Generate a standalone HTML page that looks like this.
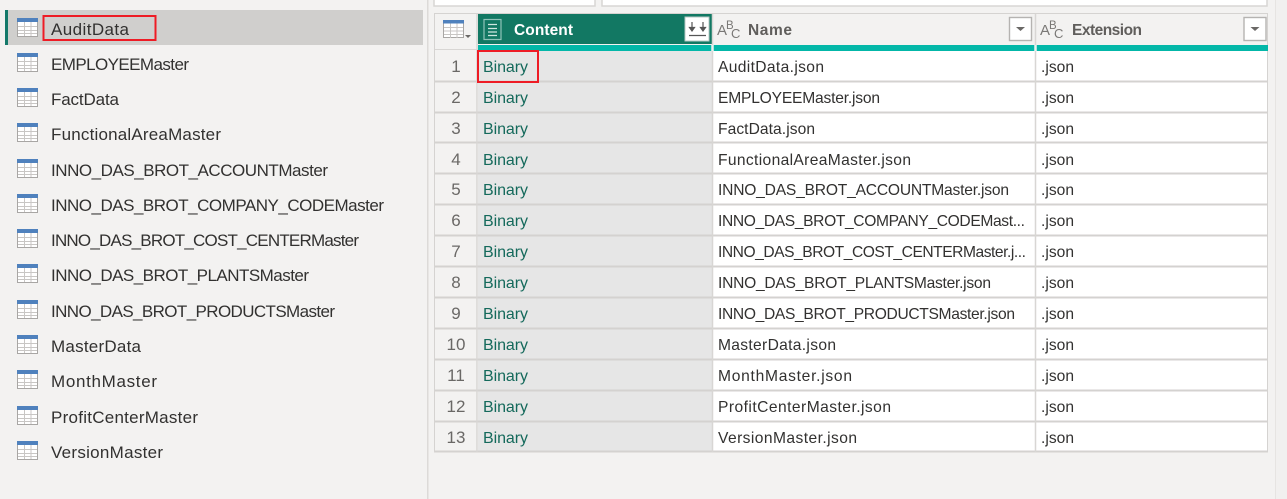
<!DOCTYPE html>
<html lang="en">
<head>
<meta charset="utf-8">
<title>Power Query Editor</title>
<style>
html,body{margin:0;padding:0;background:#f3f2f1;width:1287px;height:499px;overflow:hidden}
svg{display:block;filter:blur(.3px)}
text{font-family:"Liberation Sans",sans-serif}
.s{font-size:17px;fill:#323130}
.d{font-size:15.6px;fill:#323130}
.b{font-size:16px;fill:#14695b}
.n{font-size:17px;fill:#6a6866;text-anchor:middle}
.h{font-size:15.5px;font-weight:bold;fill:#605e5c}
.abc{fill:#7a7876;font-weight:normal}
</style>
</head>
<body>
<svg width="1287" height="499" viewBox="0 0 1287 499" xmlns="http://www.w3.org/2000/svg">
<defs>
<g id="t">
<rect x="0.5" y="0.5" width="20" height="18" fill="#fff" stroke="#a8a6a4"/>
<rect x="0" y="0" width="21" height="4" fill="#4f81bd"/>
<path d="M1 8.5H20M1 12.5H20M1 15.5H20M7.5 4V18M14 4V18" stroke="#c8c6c4" stroke-width="1" fill="none"/>
</g>
<g id="f">
<rect x="0.5" y="0.5" width="22" height="23" fill="#fff" stroke="#b5b3b1" stroke-width="1.4"/>
<path d="M7 10H16L11.5 14Z" fill="#6a6866"/>
</g>
</defs>

<rect width="1287" height="499" fill="#f3f2f1"/>
<!-- sidebar -->
<rect x="427" y="0" width="1.5" height="499" fill="#dcdad8"/>
<rect x="5" y="10" width="418" height="35" fill="#d0cfcd"/>
<rect x="5" y="10" width="3" height="35" fill="#14796a"/>
<use href="#t" x="17" y="18"/>
<use href="#t" x="17" y="53"/>
<use href="#t" x="17" y="88"/>
<use href="#t" x="17" y="123"/>
<use href="#t" x="17" y="159"/>
<use href="#t" x="17" y="194"/>
<use href="#t" x="17" y="229"/>
<use href="#t" x="17" y="264"/>
<use href="#t" x="17" y="300"/>
<use href="#t" x="17" y="335"/>
<use href="#t" x="17" y="370"/>
<use href="#t" x="17" y="406"/>
<use href="#t" x="17" y="441"/>
<text class="s" x="51" y="35" textLength="78">AuditData</text>
<text class="s" x="51" y="70" textLength="138">EMPLOYEEMaster</text>
<text class="s" x="51" y="105" textLength="68">FactData</text>
<text class="s" x="51" y="140" textLength="170">FunctionalAreaMaster</text>
<text class="s" x="51" y="176" textLength="277">INNO_DAS_BROT_ACCOUNTMaster</text>
<text class="s" x="51" y="211" textLength="333">INNO_DAS_BROT_COMPANY_CODEMaster</text>
<text class="s" x="51" y="246" textLength="308">INNO_DAS_BROT_COST_CENTERMaster</text>
<text class="s" x="51" y="281" textLength="258">INNO_DAS_BROT_PLANTSMaster</text>
<text class="s" x="51" y="317" textLength="284">INNO_DAS_BROT_PRODUCTSMaster</text>
<text class="s" x="51" y="352" textLength="90">MasterData</text>
<text class="s" x="51" y="387" textLength="106">MonthMaster</text>
<text class="s" x="51" y="423" textLength="147">ProfitCenterMaster</text>
<text class="s" x="51" y="458" textLength="112">VersionMaster</text>
<rect x="43.5" y="16" width="112" height="24" fill="none" stroke="#ee1c25" stroke-width="2"/>

<!-- top boxes -->
<rect x="434" y="-2" width="161" height="8" fill="#fff" stroke="#d8d6d4" stroke-width="1.5"/>
<rect x="602" y="-2" width="665" height="8" fill="#fff" stroke="#d8d6d4" stroke-width="1.5"/>

<!-- right edge -->
<rect x="1275" y="0" width="12" height="499" fill="#f1f0ef"/>
<rect x="1275" y="0" width="1" height="499" fill="#e6e4e2"/>

<!-- grid -->
<rect x="434.5" y="13.5" width="833" height="438.5" fill="#fff" stroke="#d5d3d1"/>
<rect x="435" y="14" width="832" height="31" fill="#f3f2f1"/>
<rect x="435" y="45" width="42" height="406" fill="#f3f2f1"/>
<rect x="478" y="51" width="234" height="401" fill="#e6e6e6"/>
<rect x="478" y="14" width="234" height="30" fill="#127863"/>
<rect x="478" y="45" width="790" height="6" fill="#03b7a8"/>
<rect x="435" y="44" width="43" height="7" fill="#f3f2f1"/>
<rect x="435" y="49" width="43" height="1" fill="#d8d6d4"/>
<!-- row lines -->
<path d="M435 81.5H1268M435 112.5H1268M435 142.5H1268M435 173.5H1268M435 204.5H1268M435 235.5H1268M435 266.5H1268M435 297.5H1268M435 328.5H1268M435 359.5H1268M435 390.5H1268M435 421.5H1268M435 451.5H1268" stroke="#d4d2d0" stroke-width="2" fill="none"/>
<!-- column lines -->
<path d="M477 14V452M712.5 14V452M1035.5 14V452" stroke="#d8d6d4" stroke-width="1.5" fill="none"/>
<rect x="711" y="45" width="3" height="6" fill="#fff" opacity=".6"/>
<rect x="1034" y="45" width="3" height="6" fill="#fff" opacity=".6"/>

<!-- header: table corner -->
<g transform="translate(443,20)">
<rect x="0.5" y="0.5" width="20" height="17" fill="#fff" stroke="#a8a6a4"/>
<rect x="0" y="0" width="21" height="3.5" fill="#4f81bd"/>
<path d="M1 7.5H20M1 11H20M1 14.5H20M7.5 3.5V18M14 3.5V18" stroke="#c8c6c4" fill="none"/>
<path d="M22 15H28L25 18Z" fill="#6a6866"/>
</g>

<!-- header: content -->
<rect x="484" y="19.5" width="17" height="20" fill="none" stroke="#8fc3b8" stroke-width="1.2"/>
<path d="M488 24.5H497M488 28.5H497M488 32H497M488 35.5H497" stroke="#cfe6e0" stroke-width="1.2" fill="none"/>
<text x="514" y="35" font-size="15.5" font-weight="bold" fill="#fff" textLength="59">Content</text>
<rect x="685" y="17" width="24" height="24" fill="#fff" stroke="#b8c9c4"/>
<path d="M692 22V30M703 22V30M689.5 27.5L692 31L694.5 27.5ZM700.5 27.5L703 31L705.5 27.5Z" stroke="#555" stroke-width="1.2" fill="#555"/>
<path d="M689 35.5H706" stroke="#555" stroke-width="1.3" fill="none"/>

<!-- header: name -->
<text class="abc" x="717" y="35" font-size="15">A</text>
<text class="abc" x="726" y="29" font-size="11.5">B</text>
<text class="abc" x="731" y="38" font-size="13">C</text>
<text class="h" x="748" y="35" textLength="44">Name</text>
<use href="#f" x="1009" y="17"/>

<!-- header: extension -->
<text class="abc" x="1040" y="35" font-size="15">A</text>
<text class="abc" x="1049" y="29" font-size="11.5">B</text>
<text class="abc" x="1054" y="38" font-size="13">C</text>
<text class="h" x="1072" y="35" textLength="70">Extension</text>
<use href="#f" x="1243.5" y="17"/>

<!-- row numbers -->
<text class="n" x="456" y="72">1</text>
<text class="n" x="456" y="103">2</text>
<text class="n" x="456" y="134">3</text>
<text class="n" x="456" y="165">4</text>
<text class="n" x="456" y="195">5</text>
<text class="n" x="456" y="226">6</text>
<text class="n" x="456" y="257">7</text>
<text class="n" x="456" y="288">8</text>
<text class="n" x="456" y="319">9</text>
<text class="n" x="456" y="350">10</text>
<text class="n" x="456" y="381">11</text>
<text class="n" x="456" y="412">12</text>
<text class="n" x="456" y="443">13</text>

<!-- content -->
<text class="b" x="483" y="72" textLength="45">Binary</text>
<text class="b" x="483" y="103" textLength="45">Binary</text>
<text class="b" x="483" y="134" textLength="45">Binary</text>
<text class="b" x="483" y="165" textLength="45">Binary</text>
<text class="b" x="483" y="195" textLength="45">Binary</text>
<text class="b" x="483" y="226" textLength="45">Binary</text>
<text class="b" x="483" y="257" textLength="45">Binary</text>
<text class="b" x="483" y="288" textLength="45">Binary</text>
<text class="b" x="483" y="319" textLength="45">Binary</text>
<text class="b" x="483" y="350" textLength="45">Binary</text>
<text class="b" x="483" y="381" textLength="45">Binary</text>
<text class="b" x="483" y="412" textLength="45">Binary</text>
<text class="b" x="483" y="443" textLength="45">Binary</text>
<rect x="478" y="51" width="60" height="31" fill="none" stroke="#ee1c25" stroke-width="2"/>

<!-- name -->
<text class="d" x="718" y="72" textLength="106">AuditData.json</text>
<text class="d" x="718" y="103" textLength="162">EMPLOYEEMaster.json</text>
<text class="d" x="718" y="134" textLength="97">FactData.json</text>
<text class="d" x="718" y="165" textLength="193">FunctionalAreaMaster.json</text>
<text class="d" x="718" y="195" textLength="291">INNO_DAS_BROT_ACCOUNTMaster.json</text>
<text class="d" x="718" y="226" textLength="307">INNO_DAS_BROT_COMPANY_CODEMast...</text>
<text class="d" x="718" y="257" textLength="308">INNO_DAS_BROT_COST_CENTERMaster.j...</text>
<text class="d" x="718" y="288" textLength="273">INNO_DAS_BROT_PLANTSMaster.json</text>
<text class="d" x="718" y="319" textLength="297">INNO_DAS_BROT_PRODUCTSMaster.json</text>
<text class="d" x="718" y="350" textLength="118">MasterData.json</text>
<text class="d" x="718" y="381" textLength="134">MonthMaster.json</text>
<text class="d" x="718" y="412" textLength="173">ProfitCenterMaster.json</text>
<text class="d" x="718" y="443" textLength="139">VersionMaster.json</text>

<!-- extension -->
<text class="d" x="1041" y="72" textLength="33">.json</text>
<text class="d" x="1041" y="103" textLength="33">.json</text>
<text class="d" x="1041" y="134" textLength="33">.json</text>
<text class="d" x="1041" y="165" textLength="33">.json</text>
<text class="d" x="1041" y="195" textLength="33">.json</text>
<text class="d" x="1041" y="226" textLength="33">.json</text>
<text class="d" x="1041" y="257" textLength="33">.json</text>
<text class="d" x="1041" y="288" textLength="33">.json</text>
<text class="d" x="1041" y="319" textLength="33">.json</text>
<text class="d" x="1041" y="350" textLength="33">.json</text>
<text class="d" x="1041" y="381" textLength="33">.json</text>
<text class="d" x="1041" y="412" textLength="33">.json</text>
<text class="d" x="1041" y="443" textLength="33">.json</text>
</svg>
</body>
</html>
